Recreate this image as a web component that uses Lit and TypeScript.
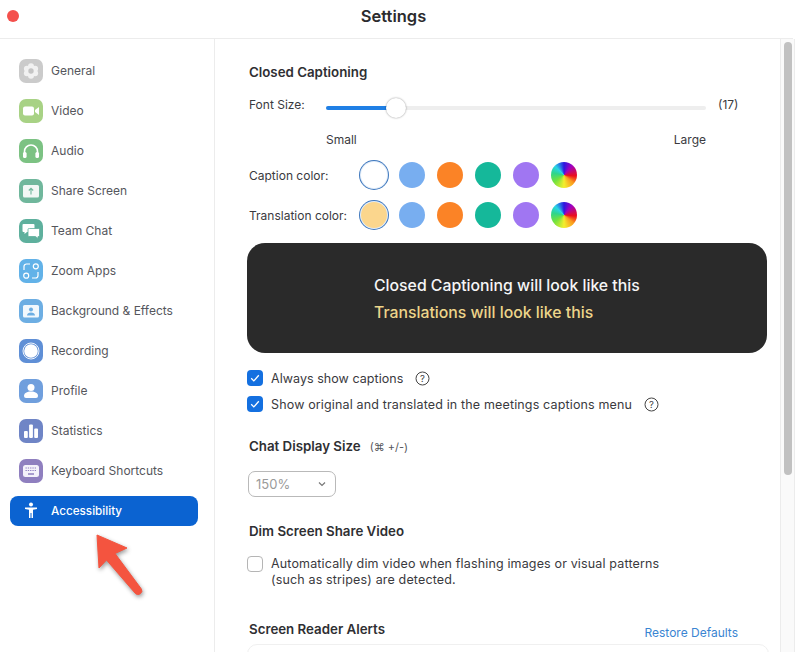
import { LitElement, html, css, svg } from 'lit';
import { customElement } from 'lit/decorators.js';

const navItems = [
  {
    label: 'General',
    color: '#cbcbcb',
    icon: svg`<g fill="#f1f1f1"><circle cx="12" cy="7.300" r="3"/><circle cx="16.100" cy="9.650" r="3"/><circle cx="16.100" cy="14.350" r="3"/><circle cx="12" cy="16.700" r="3"/><circle cx="7.900" cy="14.350" r="3"/><circle cx="7.900" cy="9.650" r="3"/><circle cx="12" cy="12" r="5"/></g><circle cx="12" cy="12" r="2.700" fill="#c4c4c4"/>`,
  },
  {
    label: 'Video',
    color: '#a8d285',
    icon: svg`<rect x="4" y="7.500" width="11" height="9" rx="2" fill="#fff"/><path fill="#fff" d="M16 11l4-3v8l-4-3z"/>`,
  },
  {
    label: 'Audio',
    color: '#7cc283',
    icon: svg`<path fill="none" stroke="#fff" stroke-width="1.600" d="M5.500 15v-2.500a6.500 6.500 0 0 1 13 0V15"/><rect x="4" y="13" width="3.600" height="6" rx="1.600" fill="#fff"/><rect x="16.400" y="13" width="3.600" height="6" rx="1.600" fill="#fff"/>`,
  },
  {
    label: 'Share Screen',
    color: '#70b79c',
    icon: svg`<rect x="4" y="6" width="16" height="12.500" rx="1.500" fill="#f2f7f5"/><path fill="none" stroke="#70b79c" stroke-width="1.100" d="M12 15.500v-6M9.800 11.500L12 9.300l2.200 2.200"/>`,
  },
  {
    label: 'Team Chat',
    color: '#5eb09d',
    icon: svg`<path fill="#fff" d="M4.500 5h10a1 1 0 0 1 1 1v6a1 1 0 0 1-1 1H8l-2.500 2v-2h-1a1 1 0 0 1-1-1V6a1 1 0 0 1 1-1z"/><path fill="#fff" stroke="#5eb09d" stroke-width=".8" d="M10.500 9.500h9a1 1 0 0 1 1 1v6a1 1 0 0 1-1 1h-.5v2l-2.500-2h-6.500a1 1 0 0 1-1-1v-6a1 1 0 0 1 1-1z"/>`,
  },
  {
    label: 'Zoom Apps',
    color: '#62b2e8',
    icon: svg`<g fill="none" stroke="#fff" stroke-width="1.200"><circle cx="16.800" cy="7.300" r="2.500"/><circle cx="7.200" cy="16.700" r="2.500"/><path d="M5 11V7.500A2.500 2.500 0 0 1 7.500 5H11M19 13v3.500a2.500 2.500 0 0 1-2.500 2.500H13"/></g>`,
  },
  {
    label: 'Background & Effects',
    color: '#6daee3',
    icon: svg`<rect x="4" y="6" width="16" height="12.500" rx="1.500" fill="#f2f8fd"/><circle cx="12" cy="10.500" r="2" fill="#6daee3"/><path fill="#6daee3" d="M8 16.500c0-2 1.800-3 4-3s4 1 4 3z"/>`,
  },
  {
    label: 'Recording',
    color: '#5f8fd6',
    icon: svg`<circle cx="12" cy="12" r="8" fill="none" stroke="#fff" stroke-width=".9"/><circle cx="12" cy="12" r="6.800" fill="#fff"/>`,
  },
  {
    label: 'Profile',
    color: '#709fdd',
    icon: svg`<circle cx="12" cy="8.500" r="3.500" fill="#fff"/><path fill="#fff" d="M5 17c0-3 3-4.500 7-4.500s7 1.500 7 4.500a2 2 0 0 1-2 2H7a2 2 0 0 1-2-2z"/>`,
  },
  {
    label: 'Statistics',
    color: '#6f85c6',
    icon: svg`<rect x="5" y="12" width="3.800" height="7" rx="1" fill="#fff"/><rect x="10.100" y="5.500" width="3.800" height="13.500" rx="1" fill="#fff"/><rect x="15.200" y="9.500" width="3.800" height="9.500" rx="1" fill="#fff"/>`,
  },
  {
    label: 'Keyboard Shortcuts',
    color: '#8f7fbf',
    icon: svg`<rect x="4" y="6" width="16" height="12" rx="2.500" fill="#f4f1fa"/><path stroke="#8f7fbf" stroke-width="1.200" stroke-dasharray="1.300 1" d="M6.500 9h11M6.500 11.500h11"/><path stroke="#8f7fbf" stroke-width="1.300" d="M9 15h6"/>`,
  },
];

const swatches = ['#78aef0', '#fb8326', '#15b89a', '#a076f2'];

@customElement('app-root')
export class AppRoot extends LitElement {
  static styles = css`
    :host {
      display: block;
      position: relative;
      width: 795px;
      height: 652px;
      overflow: hidden;
      background: #fff;
      font-family: Inter, "Liberation Sans", sans-serif;
      font-size: 12px;
      color: #3a3a3e;
    }
    .titlebar {
      position: relative;
      height: 38px;
      margin-right: 2px;
      padding-right: 6px;
      display: flex;
      justify-content: center;
      border-bottom: 1px solid #ececec;
      font-size: 16.500px;
      font-weight: 600;
      line-height: 33px;
      color: #2b2b2e;
    }
    .close {
      position: absolute;
      left: 7px;
      top: 10px;
      width: 12px;
      height: 12px;
      border-radius: 50%;
      background: #f4504c;
    }
    .body {
      display: flex;
      height: 613px;
    }
    .sidebar {
      width: 215px;
      flex: none;
      box-sizing: border-box;
      padding: 17px 0 0 10px;
      border-right: 1px solid #ececec;
      display: flex;
      flex-direction: column;
      gap: 10px;
    }
    .nav {
      width: 188px;
      height: 30px;
      box-sizing: border-box;
      padding-left: 9px;
      display: flex;
      align-items: center;
      gap: 8px;
      border-radius: 8px;
      color: #55565c;
    }
    .nav span {
      margin-bottom: 2px;
    }
    .nav svg {
      width: 24px;
      height: 24px;
      border-radius: 7px;
      flex: none;
    }
    .nav.active {
      background: #0b63d1;
      color: #fff;
      font-size: 11.700px;
      font-weight: 500;
    }
    .nav.active span {
      margin-bottom: 0;
    }
    .main {
      flex: 1;
      min-width: 0;
      box-sizing: border-box;
      padding: 25px 13px 0 34px;
      overflow: hidden;
    }
    h2 {
      margin: 0;
      font-size: 13.300px;
      line-height: 16px;
      font-weight: 600;
      color: #2f2f33;
    }
    .slider-row {
      display: flex;
      align-items: center;
      height: 22px;
      margin-top: 13px;
    }
    .slider-row .name {
      width: 77px;
      flex: none;
    }
    .track {
      position: relative;
      width: 380px;
      height: 4px;
      margin-top: 8px;
      border-radius: 2px;
      background: #eeeeee;
    }
    .fill {
      height: 100%;
      width: 70px;
      border-radius: 2px;
      background: #1f7fe5;
    }
    .thumb {
      position: absolute;
      left: 60px;
      top: -8px;
      width: 20px;
      height: 20px;
      border-radius: 50%;
      background: #fff;
      box-shadow: 0 0 2px rgba(0, 0, 0, 0.45);
    }
    .value {
      margin-left: 12px;
    }
    .scale {
      display: flex;
      justify-content: space-between;
      width: 380px;
      margin: 17px 0 0 77px;
      line-height: 16px;
    }
    .color-row {
      display: flex;
      align-items: center;
      height: 30px;
      margin-top: 10px;
    }
    .scale + .color-row {
      margin-top: 12px;
    }
    .color-row .name {
      width: 112px;
      flex: none;
    }
    .swatches {
      display: flex;
      align-items: center;
      gap: 12px;
    }
    .swatch {
      width: 26px;
      height: 26px;
      border-radius: 50%;
    }
    .swatch.selected {
      box-shadow: 0 0 0 1px #e2edfa, 0 0 0 2px #3f78bd;
    }
    .rainbow {
      background: conic-gradient(#2a18e0, #a000c0 40deg, #ec0f1d 95deg, #fb9a1e 130deg, #f3ee2d 180deg, #72e23e 235deg, #2ed58c 280deg, #29d4e6 315deg, #2a18e0);
    }
    .preview {
      box-sizing: border-box;
      width: 520px;
      height: 110px;
      margin: 13px 0 0 -2px;
      padding: 29px 0 0 127px;
      border-radius: 18px;
      background: #2a2a2a;
      color: #f6f6f6;
      font-size: 15.800px;
      font-weight: 500;
      line-height: 27px;
    }
    .preview .translated {
      color: #edd58a;
    }
    .check {
      display: flex;
      align-items: center;
      height: 16px;
      margin-left: -2px;
      gap: 8px;
      font-size: 12.500px;
      letter-spacing: 0.15px;
    }
    .check.short {
      margin-top: 17px;
      letter-spacing: 0.05px;
    }
    .check.long {
      margin-top: 10px;
    }
    .box {
      width: 16px;
      height: 16px;
      flex: none;
      box-sizing: border-box;
      border-radius: 4px;
      background: #1470e0;
    }
    .box svg {
      display: block;
    }
    .box.off {
      background: #fff;
      border: 1px solid #b5b5b5;
    }
    .help {
      width: 15px;
      height: 15px;
      margin-left: 4px;
      flex: none;
    }
    .chat-title {
      display: flex;
      align-items: baseline;
      gap: 9px;
      margin-top: 26px;
    }
    .shortcut {
      font-size: 11px;
      font-weight: 400;
      color: #55565c;
    }
    .select {
      display: flex;
      align-items: center;
      justify-content: space-between;
      box-sizing: border-box;
      width: 88px;
      height: 26px;
      margin: 16px 0 0 -1px;
      padding: 0 9px 0 7px;
      border: 1px solid #b9b9b9;
      border-radius: 7px;
      color: #9a9a9a;
      font-size: 13px;
    }
    .dim-title {
      margin-top: 26px;
    }
    .multi {
      display: flex;
      gap: 8px;
      margin: 17px 0 0 -2px;
      font-size: 12.500px;
      letter-spacing: 0.15px;
      line-height: 16px;
    }
    .alerts {
      display: flex;
      justify-content: space-between;
      width: 489px;
      margin-top: 33px;
    }
    .restore {
      margin-top: 4px;
      color: #3a85d2;
    }
    .alerts-list {
      width: 520px;
      height: 20px;
      margin: 4px 0 0 -2px;
      border: 1px solid #f0f0f0;
      border-radius: 10px;
    }
    .scrollbar {
      width: 15px;
      flex: none;
      box-sizing: border-box;
      padding: 3px 4px 0 3px;
      border-left: 1px solid #ececec;
      border-right: 1px solid #ececec;
      background: #fafafa;
    }
    .scrollbar div {
      width: 8px;
      height: 433px;
      border-radius: 4px;
      background: #c1c1c1;
    }
    .arrow {
      position: absolute;
      left: 85px;
      top: 525px;
      overflow: visible;
      filter: drop-shadow(1px 2px 2px rgba(0, 0, 0, 0.4));
    }
  `;

  private swatchRow(first: string) {
    return html`<div class="swatches">
      <div class="swatch selected" style="background:${first}"></div>
      ${swatches.map((c) => html`<div class="swatch" style="background:${c}"></div>`)}
      <div class="swatch rainbow"></div>
    </div>`;
  }

  private tick() {
    return html`<svg width="16" height="16" viewBox="0 0 16 16"><path fill="none" stroke="#fff" stroke-width="1.300" d="M4.200 8.300l2.600 2.600 5-5.600"/></svg>`;
  }

  private help() {
    return html`<svg class="help" viewBox="0 0 15 15"><circle cx="7.500" cy="7.500" r="6.500" fill="none" stroke="#444" stroke-width="1"/><text x="7.500" y="10.800" text-anchor="middle" font-size="9.500" fill="#444">?</text></svg>`;
  }

  render() {
    return html`
      <div class="titlebar"><span class="close"></span>Settings</div>
      <div class="body">
        <div class="sidebar">
          ${navItems.map(
            (item) => html`<div class="nav">
              <svg viewBox="0 0 24 24" style="background:${item.color}">${item.icon}</svg>
              <span>${item.label}</span>
            </div>`
          )}
          <div class="nav active">
            <svg viewBox="0 0 24 24">
              <circle cx="12" cy="5.500" r="2" fill="#fff" />
              <path fill="#fff" d="M6 8.500h12v1.500l-4 .8V19h-1.500v-5h-1v5H10v-8.200l-4-.8z" />
            </svg>
            <span>Accessibility</span>
          </div>
        </div>
        <div class="main">
          <h2>Closed Captioning</h2>
          <div class="slider-row">
            <span class="name">Font Size:</span>
            <div class="track">
              <div class="fill"></div>
              <div class="thumb"></div>
            </div>
            <span class="value">(17)</span>
          </div>
          <div class="scale"><span>Small</span><span>Large</span></div>
          <div class="color-row">
            <span class="name">Caption color:</span>
            ${this.swatchRow('#fff')}
          </div>
          <div class="color-row">
            <span class="name">Translation color:</span>
            ${this.swatchRow('#fbd68d')}
          </div>
          <div class="preview">
            <div>Closed Captioning will look like this</div>
            <div class="translated">Translations will look like this</div>
          </div>
          <div class="check short">
            <div class="box">${this.tick()}</div>
            <span>Always show captions</span>
            ${this.help()}
          </div>
          <div class="check long">
            <div class="box">${this.tick()}</div>
            <span>Show original and translated in the meetings captions menu</span>
            ${this.help()}
          </div>
          <h2 class="chat-title">Chat Display Size <span class="shortcut">(⌘ +/-)</span></h2>
          <div class="select">
            <span>150%</span>
            <svg width="8" height="6" viewBox="0 0 8 6"><path fill="none" stroke="#777" stroke-width="1.200" d="M1 1.500l3 3 3-3"/></svg>
          </div>
          <h2 class="dim-title">Dim Screen Share Video</h2>
          <div class="multi">
            <div class="box off"></div>
            <span>Automatically dim video when flashing images or visual patterns<br />(such as stripes) are detected.</span>
          </div>
          <div class="alerts">
            <h2>Screen Reader Alerts</h2>
            <span class="restore">Restore Defaults</span>
          </div>
          <div class="alerts-list"></div>
        </div>
        <div class="scrollbar"><div></div></div>
      </div>
      <svg class="arrow" width="70" height="80" viewBox="0 0 70 80">
        <path
          fill="#f4543f"
          stroke="#f4543f"
          stroke-linejoin="round"
          d="M12 10L42 23L30 28.500L56 63.500A3.500 3.500 0 0 1 50 68L21.500 35L14 43z"
        />
      </svg>
    `;
  }
}
